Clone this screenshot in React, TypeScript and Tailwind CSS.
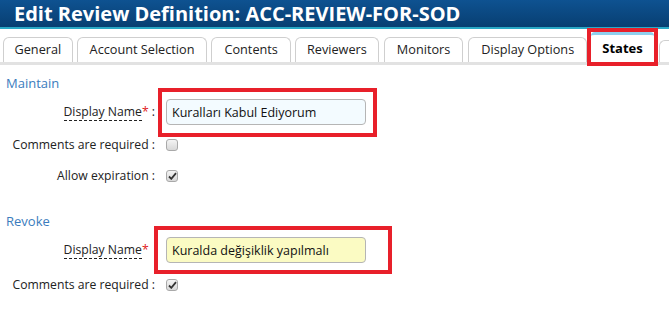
import React from "react";

const font = { fontFamily: '"Open Sans", "DejaVu Sans", sans-serif' };

const tabs = [
    { label: "General", w: "w-[70px]", ml: "ml-[3px]" },
    { label: "Account Selection", w: "w-[131px]", ml: "ml-[4px]" },
    { label: "Contents", w: "w-[80px]", ml: "ml-[4px]" },
    { label: "Reviewers", w: "w-[84px]", ml: "ml-[4px]" },
    { label: "Monitors", w: "w-[80px]", ml: "ml-[5px]" },
    { label: "Display Options", w: "w-[119px]", ml: "ml-[5px]" },
];

const Checkbox = ({ checked }: { checked: boolean }) => (
    <span className="flex h-[12px] w-[12px] items-center justify-center rounded-[3px] border border-[#a9a9a9] bg-gradient-to-b from-[#f4f4f4] to-[#d8d8d8]">
        {checked && (
            <svg width="9" height="8" viewBox="0 0 9 8">
                <path d="M1 4.5 L3.3 6.8 L8 1.2" fill="none" stroke="#333" strokeWidth="1.8" />
            </svg>
        )}
    </span>
);

const Label = ({ text }: { text: string }) => (
    <div className="w-[157px] shrink-0 pr-[2px] text-right text-[12.2px] text-[#222]">
        {text} :
    </div>
);

const NameLabel = ({ colon }: { colon: boolean }) => (
    <div className="w-[157px] shrink-0 pr-[2px] text-right text-[12.2px] text-[#222]">
        <span className="border-b border-dashed border-[#222]">Display Name</span>
        <span className="text-[#e02020]">*</span>
        {colon ? " :" : "\u00a0\u00a0"}
    </div>
);

const App = () => {
    return (
        <div className="h-[310px] w-[669px] overflow-hidden bg-white" style={font}>
            <div className="flex h-[29px] items-center border-b-2 border-[#2aa9c6] bg-gradient-to-b from-[#0e5291] to-[#083f72] pl-[14px]">
                <h1 className="text-[20px] font-bold leading-none text-white">
                    Edit Review Definition: ACC-REVIEW-FOR-SOD
                </h1>
            </div>

            <div className="flex h-[36px] items-end border-b-[3px] border-[#e2e2e2]">
                {tabs.map((t) => (
                    <div
                        key={t.label}
                        className={
                            "flex h-[25px] items-center justify-center rounded-t-[6px] border border-b-0 border-[#cfcfcf] bg-white text-[12.7px] text-[#222] " +
                            t.w +
                            " " +
                            t.ml
                        }
                    >
                        {t.label}
                    </div>
                ))}
                <div className="relative ml-[4px]">
                    <div className="flex h-[30px] w-[63px] items-center justify-center rounded-t-[4px] border-t-[3px] border-[#8fd0ee] bg-white text-[13px] font-bold text-black">
                        States
                    </div>
                    <span className="absolute -left-[4px] -top-[4px] h-[38px] w-[71px] border-4 border-[#e8202a]" />
                </div>
                <div className="ml-[5px] h-[22px] w-[10px] rounded-tl-[6px] border-l border-t border-[#cfcfcf]" />
            </div>

            <div className="pl-[6px] pt-[9px] text-[13px] leading-[18px] text-[#3b7cbd]">Maintain</div>
            <div className="mt-[7px] flex h-[26px] items-center">
                <NameLabel colon />
                <div className="relative ml-[9px]">
                    <input
                        readOnly
                        value="Kuralları Kabul Ediyorum"
                        className="h-[26px] w-[200px] rounded-[4px] border border-[#b5b5b5] bg-[#f3fbff] px-[5px] text-[12.5px] text-[#111] outline-none"
                        style={font}
                    />
                    <span className="absolute -left-[8px] -top-[11px] h-[49px] w-[219px] border-4 border-[#e8202a]" />
                </div>
            </div>
            <div className="mt-[10px] flex h-[20px] items-center">
                <Label text="Comments are required" />
                <div className="ml-[9px]">
                    <Checkbox checked={false} />
                </div>
            </div>
            <div className="mt-[11px] flex h-[20px] items-center">
                <Label text="Allow expiration" />
                <div className="ml-[9px]">
                    <Checkbox checked />
                </div>
            </div>

            <div className="mt-[26px] pl-[6px] text-[13px] leading-[18px] text-[#3b7cbd]">Revoke</div>
            <div className="mt-[7px] flex h-[26px] items-center">
                <NameLabel colon={false} />
                <div className="relative ml-[9px]">
                    <input
                        readOnly
                        value="Kuralda değişiklik yapılmalı"
                        className="h-[26px] w-[200px] rounded-[4px] border border-[#b5b5b5] bg-[#fbfbc3] px-[5px] text-[12.5px] text-[#111] outline-none"
                        style={font}
                    />
                    <span className="absolute -left-[12px] -top-[11px] h-[48px] w-[238px] border-4 border-[#e8202a]" />
                </div>
            </div>
            <div className="mt-[12px] flex h-[20px] items-center">
                <Label text="Comments are required" />
                <div className="ml-[9px]">
                    <Checkbox checked />
                </div>
            </div>
        </div>
    );
};

export default App;
